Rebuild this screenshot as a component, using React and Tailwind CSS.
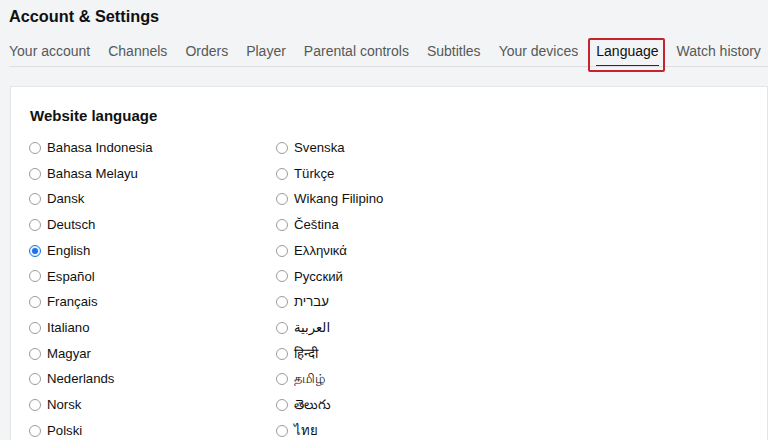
import React from 'react';

const tabs = ['Your account', 'Channels', 'Orders', 'Player', 'Parental controls', 'Subtitles', 'Your devices', 'Language', 'Watch history'];

const leftLangs = ['Bahasa Indonesia', 'Bahasa Melayu', 'Dansk', 'Deutsch', 'English', 'Español', 'Français', 'Italiano', 'Magyar', 'Nederlands', 'Norsk', 'Polski'];
const rightLangs = ['Svenska', 'Türkçe', 'Wikang Filipino', 'Čeština', 'Ελληνικά', 'Русский', 'עברית', 'العربية', 'हिन्दी', 'தமிழ்', 'తెలుగు', 'ไทย'];

const Radio = ({ checked }) => (
    <span className={`w-[12px] h-[12px] rounded-full border shrink-0 flex items-center justify-center ${checked ? 'border-[#1a73e8] bg-[#e8f0fe]' : 'border-[#9a9ca0] bg-white'}`}>
        {checked && <span className="w-[6px] h-[6px] rounded-full bg-[#1a73e8]"></span>}
    </span>
);

const LangOption = ({ label, checked }) => (
    <div className="h-[25.73px] flex items-center gap-[6px] text-[13.2px] text-[#0f1111]">
        <Radio checked={checked} />
        <span>{label}</span>
    </div>
);

export default function App() {
    return (
        <div className="w-[768px] h-[440px] overflow-hidden bg-[#f2f4f5] font-['Liberation_Sans','DejaVu_Sans',sans-serif]">
            {/* Kopfzeile */}
            <h1 className="pl-[9px] pt-[5px] h-[32px] text-[16.3px] font-bold text-[#0f1111] leading-[22px]">Account &amp; Settings</h1>

            <div className="ml-[9px] h-[35px] flex items-end gap-[18px] border-b border-[#dde0e0] text-[14px] text-[#565959] whitespace-nowrap">
                {tabs.map(t => (
                    t === 'Language' ? (
                        <div key={t} className="relative h-full flex items-end pb-[4px] text-[#0f1111]">
                            <span className="absolute -left-[8px] -right-[6px] top-[6px] bottom-[-6px] border-2 border-[#c8222c] rounded-[2px]"></span>
                            <span>{t}</span>
                            <span className="absolute left-0 right-0 bottom-[0px] h-[1.5px] bg-[#232f3e]"></span>
                        </div>
                    ) : (
                        <div key={t} className="h-full flex items-end pb-[4px]"><span>{t}</span></div>
                    )
                ))}
            </div>

            {/* Sprachauswahl */}
            <div className="mt-[19px] ml-[10px] h-[400px] bg-white border border-[#e3e6e6] pl-[18px] pt-[18px]">
                <h2 className="pl-[1px] text-[15px] font-bold text-[#0f1111] leading-[22px] mb-[8px]">Website language</h2>
                <div className="flex">
                    <div className="w-[247px] flex flex-col">
                        {leftLangs.map(l => <LangOption key={l} label={l} checked={l === 'English'} />)}
                    </div>
                    <div className="flex flex-col">
                        {rightLangs.map(l => <LangOption key={l} label={l} />)}
                    </div>
                </div>
            </div>
        </div>
    );
}
